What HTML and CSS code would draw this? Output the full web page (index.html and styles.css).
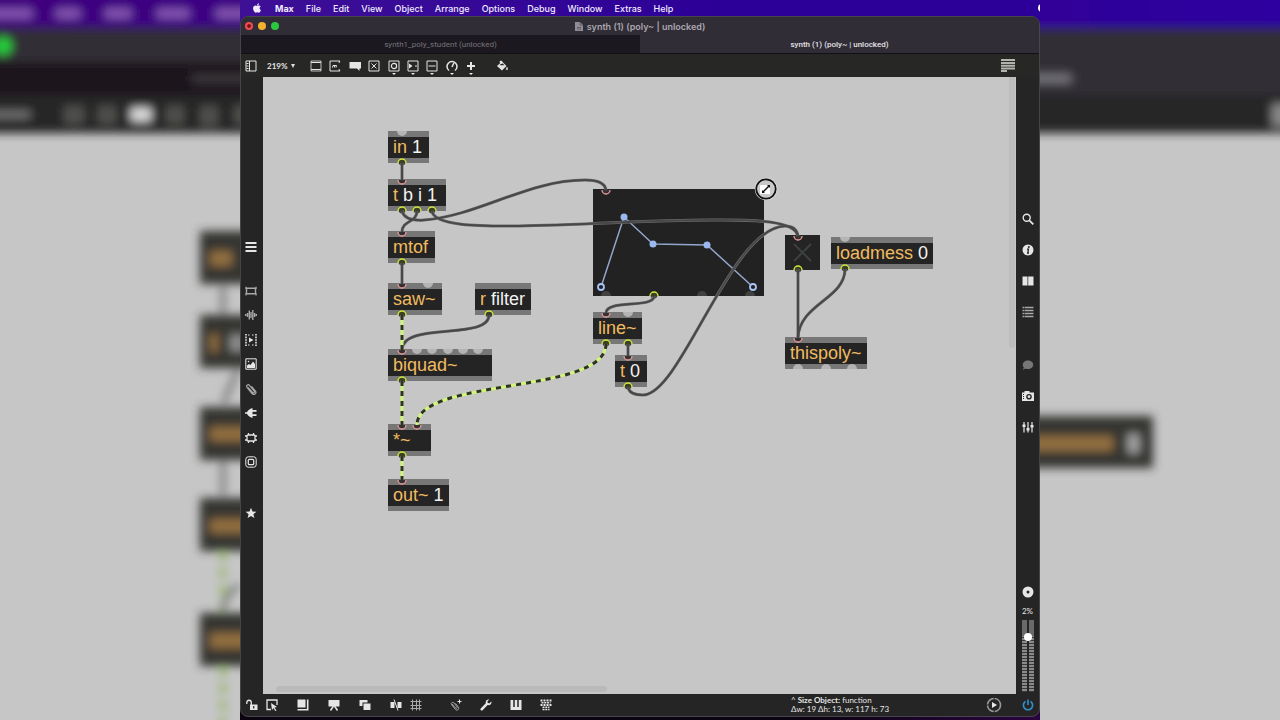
FILE: index.html
```
<!DOCTYPE html>
<html lang="en">
<head>
    <meta charset="UTF-8">
    <meta name="viewport" content="width=device-width, initial-scale=1.0">
    <title>synth (1) (poly~ | unlocked)</title>
    <link rel="stylesheet" href="styles.css">
</head>
<body>
    <!-- Blurred backdrop -->
    <svg class="backdrop" viewBox="0 0 1280 720" preserveAspectRatio="xMidYMin slice" aria-hidden="true">
        <defs>
            <filter id="soft" x="-10%" y="-10%" width="120%" height="120%"><feGaussianBlur stdDeviation="5"/></filter>
            <linearGradient id="purple"><stop offset="0" stop-color="#40007c"/><stop offset="1" stop-color="#2c00a0"/></linearGradient>
        </defs>
        <rect width="1280" height="720" fill="#c6c6c6"/>
        <g filter="url(#soft)">
            <rect x="-40" y="-40" width="1360" height="68" fill="url(#purple)"/>
            <rect x="-40" y="28" width="1360" height="68" fill="#312d36"/>
            <rect x="-40" y="62" width="680" height="34" fill="#1b191f"/>
            <rect x="-40" y="95" width="1360" height="38" fill="#272725"/>
            <g fill="#8a58b6">
                <rect x="-20" y="9" width="52" height="9"/>
                <rect x="56" y="9" width="24" height="9"/>
                <rect x="105" y="9" width="26" height="9"/>
                <rect x="157" y="9" width="32" height="9"/>
                <rect x="216" y="9" width="46" height="9"/>
            </g>
            <circle cx="3" cy="46" r="9" fill="#28d03c"/>
            <rect x="192" y="75" width="60" height="7" fill="#3c3a40"/>
            <rect x="1030" y="74" width="41" height="9" fill="#77747c"/>
            <rect x="-10" y="111" width="40" height="7" fill="#777"/>
            <g fill="#50504e">
                <rect x="64" y="106" width="20" height="18"/>
                <rect x="98" y="106" width="18" height="18"/>
                <rect x="166" y="106" width="18" height="18"/>
                <rect x="200" y="106" width="18" height="20"/>
                <rect x="234" y="106" width="18" height="18"/>
            </g>
            <rect x="131" y="108" width="20" height="13" fill="#ddd"/>
            <rect x="1272" y="104" width="30" height="22" fill="#888"/>
            <path d="M223 285v30M238 369L223 404M223 460v36" stroke="#777" stroke-width="5" fill="none"/>
            <path d="M223 552v60M223 667v80" stroke="#8fb45c" stroke-width="6" stroke-dasharray="9 8"/>
            <path d="M240 586q-14 4-17 25" stroke="#777" stroke-width="5" fill="none"/>
            <g fill="#353431">
                <rect x="200" y="231" width="80" height="53"/>
                <rect x="200" y="315" width="80" height="53"/>
                <rect x="200" y="407" width="80" height="53"/>
                <rect x="200" y="498" width="80" height="53"/>
                <rect x="200" y="613" width="80" height="53"/>
                <rect x="1000" y="416" width="153" height="52"/>
            </g>
            <g fill="#927040">
                <rect x="210" y="251" width="22" height="15"/>
                <rect x="210" y="334" width="8" height="18"/>
                <rect x="210" y="427" width="60" height="14"/>
                <rect x="210" y="519" width="60" height="14"/>
                <rect x="210" y="633" width="60" height="15"/>
                <rect x="1000" y="436" width="113" height="15"/>
            </g>
            <rect x="1128" y="434" width="11" height="19" fill="#a5a5a5"/>
            <rect x="230" y="335" width="14" height="16" fill="#909090"/>
        </g>
    </svg>

    <!-- Shared shapes for patch cords -->
    <svg class="defs" aria-hidden="true">
        <symbol id="inlet" viewBox="-6 -6 12 12"><path d="M-4 0a4 4 0 0 0 8 0z" fill="#333"/><path d="M-4 0a4 4 0 0 0 8 0" fill="none" stroke="#f09c9c" stroke-width="1.3"/></symbol>
        <symbol id="outlet" viewBox="-6 -6 12 12"><circle r="3.4" fill="#3c4028"/><path d="M-4 1a4 4 0 1 1 8 0" fill="none" stroke="#d0e83c" stroke-width="1.4"/></symbol>
        <symbol id="free-in" viewBox="-6 -6 12 12"><path d="M-5 0a5 5 0 0 0 10 0z" fill="#b4b4b4"/></symbol>
        <symbol id="free-out" viewBox="-6 -6 12 12"><path d="M-5 0a5 5 0 0 1 10 0z" fill="currentColor"/></symbol>
        <g id="control">
            <path d="M139 86v17"/>
            <path d="M139 134C141 141 148 144 161 143C215 139 265 103 322 103C335 103 342 106 343 113"/>
            <path d="M154 134C154 146 139 143 139 155"/>
            <path d="M169 134C171 150 225 149 250 149C300 149 400 142 460 143C505 143 532 146 535 159"/>
            <path d="M139 186v21"/>
            <path d="M226 238C226 264 139 244 139 273"/>
            <path d="M391 219C391 232 343 222 343 236"/>
            <path d="M365 267v12"/>
            <path d="M365 310C366 316 371 318 380 318C418 318 468 150 522 149C530 149 534 153 535 159"/>
            <path d="M535 192v69"/>
            <path d="M582 192C582 222 536 227 535 261"/>
        </g>
        <g id="signal">
            <path d="M139 238v35"/>
            <path d="M139 304v44"/>
            <path d="M139 379v24"/>
            <path d="M343 267C343 318 154 300 154 348"/>
        </g>
    </svg>

    <div class="desktop">
        <nav class="menubar" aria-label="Menu bar">
            <button class="menu-item apple" aria-label="Apple"><svg width="8" height="10" viewBox="0 20 384 472"><path fill="currentColor" d="M318.7 268.7c-.2-36.7 16.4-64.4 50-84.8-18.8-26.9-47.2-41.7-84.7-44.6-35.5-2.8-74.3 20.7-88.5 20.7-15 0-49.4-19.7-76.4-19.7C63.3 141.2 4 184.8 4 273.5q0 39.3 14.4 81.2c12.8 36.7 59 126.7 107.2 125.2 25.2-.6 43-17.9 75.8-17.9 31.8 0 48.3 17.9 76.4 17.9 48.6-.7 90.4-82.5 102.6-119.3-65.2-30.7-61.7-90-61.7-91.9zm-56.6-164.2c27.3-32.4 24.8-61.9 24-72.5-24.1 1.4-52 16.4-67.9 34.9-17.5 19.8-27.8 44.3-25.6 71.9 26.1 2 49.9-11.4 69.5-34.3z"/></svg></button>
            <button class="menu-item app">Max</button>
            <button class="menu-item">File</button>
            <button class="menu-item">Edit</button>
            <button class="menu-item">View</button>
            <button class="menu-item">Object</button>
            <button class="menu-item">Arrange</button>
            <button class="menu-item">Options</button>
            <button class="menu-item">Debug</button>
            <button class="menu-item">Window</button>
            <button class="menu-item">Extras</button>
            <button class="menu-item">Help</button>
            <span class="menu-extra"></span>
        </nav>

        <main class="window">
            <header class="titlebar">
                <div class="lights">
                    <button class="light close" aria-label="Close"></button>
                    <button class="light minimize" aria-label="Minimize"></button>
                    <button class="light zoom" aria-label="Zoom"></button>
                </div>
                <h1 class="title">
                    <svg width="8" height="9" viewBox="0 0 8 9"><path d="M0 0h5l3 3v6H0z" fill="#8f8c94"/><path d="M5 0v3h3M2 5.5h4M2 7h4" stroke="#55525a" stroke-width=".8" fill="none"/></svg>
                    synth (1) (poly~ | unlocked)
                </h1>
            </header>

            <div class="tabs" role="tablist">
                <button class="tab" role="tab" aria-selected="false">synth1_poly_student (unlocked)</button>
                <button class="tab active" role="tab" aria-selected="true">synth (1) (poly~ | unlocked)</button>
            </div>

            <div class="toolbar">
                <button class="icon" aria-label="Toggle sidebar"><svg viewBox="0 0 12 12"><path d="M1 1h10v10H1zM4.500 1v10M1.500 3.500h2M1.500 6h2M1.500 8.500h2" fill="none" stroke="currentColor"/></svg></button>
                <button class="zoom-level">219% <span class="caret"></span></button>
                <div class="tools">
                    <button class="icon" aria-label="Object"><svg viewBox="0 0 12 12"><path d="M1 1h10v10H1z" fill="none" stroke="currentColor" stroke-width=".8"/><path d="M1 2.500h10M1 9.500h10" stroke="currentColor" stroke-width="1.200"/></svg></button>
                    <button class="icon" aria-label="Message"><svg viewBox="0 0 12 12"><path d="M11 1H1v10h10M11 1q-1 1-1 2M11 11q-1-1-1-2" fill="none" stroke="currentColor"/><path d="M3.500 7.500l.5-2h3.500l-.5 2M5.700 5.500l-.4 2" fill="none" stroke="currentColor"/></svg></button>
                    <button class="icon" aria-label="Comment"><svg viewBox="0 0 12 12"><path d="M.5 2H12v6.500h-1.500V11L8 8.500H.5z" fill="currentColor"/></svg></button>
                    <button class="icon" aria-label="Toggle"><svg viewBox="0 0 12 12"><path d="M1 1h10v10H1zM3.500 3.500l5 5M8.500 3.500l-5 5" fill="none" stroke="currentColor"/></svg></button>
                    <button class="icon drop" aria-label="Button"><svg viewBox="0 0 12 12"><path d="M1 1h10v10H1z" fill="none" stroke="currentColor"/><circle cx="6" cy="6" r="2.600" fill="none" stroke="currentColor" stroke-width="1.200"/></svg></button>
                    <button class="icon drop" aria-label="Number"><svg viewBox="0 0 12 12"><path d="M1 1h10v10H1z" fill="none" stroke="currentColor"/><path d="M2 3.500L5.500 6 2 8.500z" fill="currentColor"/><path d="M8 6h2" stroke="currentColor"/></svg></button>
                    <button class="icon drop" aria-label="Slider"><svg viewBox="0 0 12 12"><path d="M1 1h10v10H1zM2.500 6h7" fill="none" stroke="currentColor"/></svg></button>
                    <button class="icon drop" aria-label="Dial"><svg viewBox="0 0 12 12"><path d="M3 10.500a5 5 0 1 1 6 0M6 7l1.800-4" fill="none" stroke="currentColor" stroke-width="1.500"/></svg></button>
                    <button class="icon drop" aria-label="Add"><svg viewBox="0 0 12 12"><path d="M6 2v8M2 6h8" stroke="currentColor" stroke-width="2"/></svg></button>
                </div>
                <button class="icon" aria-label="Format"><svg viewBox="0 0 12 12"><path d="M1 6l5-4.500L10.500 6 6 10.500z" fill="currentColor"/><path d="M3.500 5.300L6 3l2.500 2.300z" fill="#272725"/><path d="M4 3V1h2v3M11 7l1 2.500h-2z" fill="currentColor" stroke="currentColor" stroke-width=".4"/></svg></button>
                <button class="icon wide" aria-label="Inspector list"><svg viewBox="0 0 14 13"><path d="M0 1h14M0 4h14M0 6.800h14M0 9.500h14M0 12h6" stroke="currentColor" stroke-width="2"/></svg></button>
            </div>

            <div class="body">
                <aside class="rail left">
                    <button class="icon" aria-label="Menu"><svg viewBox="0 0 12 12"><path d="M.5 2h11M.5 6h11M.5 10h11" stroke="currentColor" stroke-width="2"/></svg></button>
                    <div class="browse">
                        <button class="icon dim" aria-label="Objects"><svg viewBox="0 0 12 12"><path d="M1.500 3v6M10.500 3v6M.5 3.200h11M.5 8.800h11" fill="none" stroke="currentColor" stroke-width="1.400"/><path d="M1 1.700v2M11 1.700v2M1 8.500v2M11 8.500v2" stroke="currentColor" stroke-width="1.200"/></svg></button>
                        <button class="icon dim" aria-label="Audio"><svg viewBox="0 0 12 12"><path d="M.7 5v2M2.500 4v4M4.300 1.500v9M6 3v6M7.800 1v10M9.600 4v4M11.300 5v2" stroke="currentColor" stroke-width="1.400"/></svg></button>
                        <button class="icon" aria-label="Video"><svg viewBox="0 0 12 12"><path d="M1 0v12M11 0v12" stroke="currentColor" stroke-width="1.600" stroke-dasharray="1.600 1"/><path d="M4 3.500L8.500 6 4 8.500zM3 .5h1.500v1H3zM7 .5h1.500v1H7zM3 10.500h1.500v1H3zM7 10.500h1.500v1H7z" fill="currentColor"/></svg></button>
                        <button class="icon" aria-label="Images"><svg viewBox="0 0 12 12"><path d="M.8.8h10.400v10.400H.8z" fill="none" stroke="currentColor"/><path d="M2 10V7.500l2-1.500 1.500 1L8 3.500 10 6v4z" fill="currentColor"/><circle cx="3.500" cy="3.500" r=".8" fill="currentColor"/></svg></button>
                        <button class="icon dim" aria-label="Attachments"><svg viewBox="0 0 12 12"><path d="M3 4.500l4.500 5c1 1 2.600-.3 1.700-1.500L4.500 2.300C3.200.8.800 2.300 2 4.300l5 6.200c2 2 5 0 3.500-2.500L6.500 3.500" fill="none" stroke="currentColor" stroke-width="1.200"/></svg></button>
                        <button class="icon" aria-label="Plug-ins"><svg viewBox="0 0 12 12"><path d="M0 5.200h2C3 3 4.500 2 7.500 1v10C4.500 10 3 9 2 6.800H0zM7 3h4.500v1.700H7zM7 7.300h4.500V9H7z" fill="currentColor"/></svg></button>
                        <button class="icon" aria-label="Devices"><svg viewBox="0 0 12 12"><rect x="2" y="3" width="8" height="6" rx="1" fill="none" stroke="currentColor" stroke-width="1.300"/><path d="M3.500 1v2M8.500 1v2M3.500 9v2M8.500 9v2M0 4h2M10 4h2M0 8h2M10 8h2" stroke="currentColor" stroke-width="1.300"/></svg></button>
                        <button class="icon" aria-label="Packages"><svg viewBox="0 0 12 12"><rect x=".8" y=".8" width="10.400" height="10.400" rx="2.500" fill="none" stroke="currentColor"/><rect x="3.300" y="3.300" width="5.400" height="5.400" rx="1" fill="none" stroke="currentColor" stroke-width="1.200"/></svg></button>
                    </div>
                    <button class="icon" aria-label="Favorites"><svg viewBox="0 0 12 12"><path d="M6 .8l1.500 3.600 3.900.3-3 2.500 1 3.800L6 9l-3.400 2 1-3.800-3-2.500 3.900-.3z" fill="currentColor"/></svg></button>
                </aside>

                <section class="canvas" aria-label="Patcher">
                    <div class="box n-in"><b>in</b> 1</div>
                    <div class="box n-trigger"><b>t</b> b i 1</div>
                    <div class="box n-mtof"><b>mtof</b></div>
                    <div class="box n-saw"><b>saw~</b></div>
                    <div class="box n-receive"><b>r</b> filter</div>
                    <div class="box n-biquad"><b>biquad~</b></div>
                    <div class="box n-times"><b>*~</b></div>
                    <div class="box n-out"><b>out~</b> 1</div>
                    <div class="box n-line"><b>line~</b></div>
                    <div class="box n-zero"><b>t</b> 0</div>
                    <div class="box n-loadmess"><b>loadmess</b> 0</div>
                    <div class="box n-thispoly"><b>thispoly~</b></div>

                    <div class="function">
                        <svg width="171" height="107" viewBox="0 0 171 107" fill="#9ab8ee">
                            <path d="M8 98L31 28 60 55l54 1 46 42" fill="none" stroke="#93a6cb" stroke-width="1.500"/>
                            <circle cx="31" cy="28" r="3.500"/>
                            <circle cx="60" cy="55" r="3.500"/>
                            <circle cx="114" cy="56" r="3.500"/>
                            <g fill="#222" stroke="#a9c4f5" stroke-width="1.800"><circle cx="8" cy="98" r="3"/><circle cx="160" cy="98" r="3"/></g>
                        </svg>
                    </div>
                    <label class="toggle">
                        <input type="checkbox" aria-label="toggle">
                        <svg width="19" height="19" viewBox="0 0 19 19"><path d="M1 1l17 17M18 1L1 18" stroke="#3d413d" stroke-width="2"/></svg>
                    </label>

                    <!-- Ports and patch cords, drawn over the boxes -->
                    <svg class="cords" width="753" height="617" viewBox="0 0 753 617" aria-hidden="true">
                        <g>
                            <use href="#free-in" x="133" y="48" width="12" height="12"/>
                            <use href="#inlet" x="133" y="97" width="12" height="12"/>
                            <use href="#inlet" x="133" y="149" width="12" height="12"/>
                            <use href="#inlet" x="133" y="201" width="12" height="12"/>
                            <use href="#free-in" x="159" y="200" width="12" height="12"/>
                            <use href="#inlet" x="133" y="267" width="12" height="12"/>
                            <use href="#free-in" x="148" y="266" width="12" height="12"/>
                            <use href="#free-in" x="163" y="266" width="12" height="12"/>
                            <use href="#free-in" x="179" y="266" width="12" height="12"/>
                            <use href="#free-in" x="194" y="266" width="12" height="12"/>
                            <use href="#free-in" x="209" y="266" width="12" height="12"/>
                            <use href="#inlet" x="133" y="342" width="12" height="12"/>
                            <use href="#inlet" x="148" y="342" width="12" height="12"/>
                            <use href="#inlet" x="133" y="397" width="12" height="12"/>
                            <use href="#inlet" x="337" y="107" width="12" height="12"/>
                            <use href="#inlet" x="337" y="230" width="12" height="12"/>
                            <use href="#free-in" x="359" y="229" width="12" height="12"/>
                            <use href="#inlet" x="359" y="273" width="12" height="12"/>
                            <use href="#inlet" x="529" y="153" width="12" height="12"/>
                            <use href="#free-in" x="576" y="154" width="12" height="12"/>
                            <use href="#inlet" x="529" y="255" width="12" height="12"/>
                        </g>
                        <g>
                            <use href="#outlet" x="133" y="79" width="12" height="12"/>
                            <use href="#outlet" x="133" y="127" width="12" height="12"/>
                            <use href="#outlet" x="148" y="127" width="12" height="12"/>
                            <use href="#outlet" x="163" y="127" width="12" height="12"/>
                            <use href="#outlet" x="133" y="179" width="12" height="12"/>
                            <use href="#outlet" x="133" y="231" width="12" height="12"/>
                            <use href="#outlet" x="220" y="231" width="12" height="12"/>
                            <use href="#outlet" x="133" y="297" width="12" height="12"/>
                            <use href="#outlet" x="133" y="372" width="12" height="12"/>
                            <use href="#outlet" x="385" y="212" width="12" height="12"/>
                            <use href="#outlet" x="337" y="260" width="12" height="12"/>
                            <use href="#outlet" x="359" y="260" width="12" height="12"/>
                            <use href="#outlet" x="359" y="303" width="12" height="12"/>
                            <use href="#outlet" x="529" y="186" width="12" height="12"/>
                            <use href="#outlet" x="576" y="185" width="12" height="12"/>
                        </g>
                        <g color="#414141">
                            <use href="#free-out" x="337" y="213" width="12" height="12"/>
                            <use href="#free-out" x="433" y="213" width="12" height="12"/>
                            <use href="#free-out" x="481" y="213" width="12" height="12"/>
                        </g>
                        <g color="#b4b4b4">
                            <use href="#free-out" x="529" y="286" width="12" height="12"/>
                            <use href="#free-out" x="557" y="286" width="12" height="12"/>
                            <use href="#free-out" x="583" y="286" width="12" height="12"/>
                        </g>
                        <use href="#control" class="cord"/>
                        <use href="#control" class="cord core"/>
                        <use href="#signal" class="cord signal"/>
                        <use href="#signal" class="cord dashes"/>
                    </svg>

                    <svg class="resize" width="24" height="24" viewBox="0 0 24 24" aria-hidden="true"><circle cx="12" cy="12" r="9.700" fill="#c9c9c9" stroke="#ddd" stroke-width="3"/><circle cx="12" cy="12" r="9.700" fill="none" stroke="#111" stroke-width="1.800"/><path d="M6 8h10v9H6z" fill="#fff"/><path d="M8.500 15.500l7-7" stroke="#111" stroke-width="1.500"/><path d="M13 8h3v3zM8 13v3h3z" fill="#111"/></svg>
                    <div class="scroll-y"></div>
                    <div class="scroll-x"></div>
                </section>

                <aside class="rail right">
                    <button class="icon" aria-label="Search"><svg viewBox="0 0 12 12"><circle cx="4.700" cy="4.700" r="3.500" fill="none" stroke="currentColor" stroke-width="1.400"/><path d="M7.300 7.300l4 4" stroke="currentColor" stroke-width="1.800"/></svg></button>
                    <button class="icon" aria-label="Inspector"><svg viewBox="0 0 12 12"><circle cx="6" cy="6" r="5.500" fill="currentColor"/><circle cx="6.800" cy="3" r="1" fill="#252525"/><path d="M5 5.200h1.500L5.700 9H7" fill="none" stroke="#252525" stroke-width="1.300"/></svg></button>
                    <button class="icon" aria-label="Reference"><svg viewBox="0 0 12 12"><path d="M.5 1.500h5v9h-5zM6.200 1.500h5.300v9H6.200z" fill="currentColor"/></svg></button>
                    <button class="icon dim" aria-label="Console"><svg viewBox="0 0 12 12"><path d="M.5 1.500h2M3 1.500h8.500M.5 4.500h2M3 4.500h8.500M.5 7.500h2M3 7.500h8.500M.5 10.500h2M3 10.500h8.500" stroke="currentColor" stroke-width="1.600"/></svg></button>
                    <button class="icon off" aria-label="Notes"><svg viewBox="0 0 12 12"><path d="M6 1.500c3 0 5.200 1.800 5.200 4.200S9 10 6 10c-1 0-2-.2-2.700-.6L1 11l.8-2.700C1 7.500.8 6.700.8 5.700.8 3.300 3 1.500 6 1.500z" fill="currentColor"/></svg></button>
                    <button class="icon" aria-label="Snapshots"><svg viewBox="0 0 12 12"><path d="M0 2.500h2.500v-1.500h5v1.500H12V11H0z" fill="currentColor"/><circle cx="7" cy="6.700" r="2.800" fill="#252525"/><circle cx="7" cy="6.700" r="1.400" fill="currentColor"/><path d="M1.500 4v6" stroke="#252525" stroke-dasharray="1 1"/></svg></button>
                    <button class="icon" aria-label="Mixer"><svg viewBox="0 0 12 12"><path d="M2 1v10.500M6 1v10.500M10 1v10.500" stroke="currentColor" stroke-width="1.200"/><path d="M.5 3.500h3v2.500h-3zM4.500 7h3v2.500h-3zM8.500 4h3v2.500h-3z" fill="currentColor"/></svg></button>
                    <div class="level">
                        <button class="icon" aria-label="Record"><svg viewBox="0 0 12 12"><circle cx="6" cy="6" r="3.500" fill="none" stroke="currentColor" stroke-width="4"/></svg></button>
                        <label for="gain">2%</label>
                        <input id="gain" class="gain" type="range" min="0" max="100" value="79">
                    </div>
                </aside>
            </div>

            <footer class="statusbar">
                <div class="modes">
                    <div class="pair">
                        <button class="icon" aria-label="Unlock"><svg viewBox="0 0 12 12"><path d="M4 5.500h7.500V11H4z" fill="currentColor"/><path d="M.8 5V3.500c0-3 4.500-3 4.500 0V6" fill="none" stroke="currentColor" stroke-width="1.300"/><path d="M7.700 7v2.500" stroke="#252525" stroke-width="1.200"/></svg></button>
                        <button class="icon" aria-label="Select"><svg viewBox="0 0 12 12"><path d="M5 10.500H1V1h10v5" fill="none" stroke="currentColor" stroke-width="1.300"/><path d="M5 4l6 4-2.500.5 2 3-1.300.5-1.700-3L6 11z" fill="currentColor"/></svg></button>
                    </div>
                    <button class="icon" aria-label="New view"><svg viewBox="0 0 12 12"><path d="M.5.5h8v8h-8z" fill="currentColor"/><path d="M10.700.5v10.200H.5" fill="none" stroke="currentColor" stroke-width="1.600"/></svg></button>
                    <button class="icon" aria-label="Presentation"><svg viewBox="0 0 12 12"><path d="M.5 1h11v6.500h-11z" fill="currentColor"/><path d="M5.500 7l-3 4.500M6.500 7l3 4.500" stroke="currentColor" stroke-width="1.500"/></svg></button>
                    <button class="icon" aria-label="Layers"><svg viewBox="0 0 12 12"><path d="M.5 1h8v2.500H3.500v3.500h-3z" fill="currentColor"/><path d="M4.500 4.500h7V11h-7z" fill="currentColor"/></svg></button>
                    <div class="pair">
                        <button class="icon" aria-label="Patch cords"><svg viewBox="0 0 12 12"><path d="M.5 3h4v6h-4zM7.500 3h4v6h-4z" fill="currentColor"/><path d="M4 .5l4 11" stroke="currentColor"/></svg></button>
                        <button class="icon dim" aria-label="Grid"><svg viewBox="0 0 12 12"><path d="M2.500.5v11M6.500.5v11M9.500.5v11M.5 2.500h11M.5 6.500h11M.5 9.500h11" stroke="currentColor"/></svg></button>
                    </div>
                </div>
                <div class="modes extra">
                    <button class="icon dim" aria-label="Add attachment"><svg viewBox="0 0 12 12"><path d="M2 5l3.500 4c1 1 2.300-.2 1.500-1.200L4 4C2.500 2.500.5 4 1.500 5.500l4 5c1.800 1.500 4-.2 3-2.200L5.500 4.500" fill="none" stroke="currentColor"/><path d="M9.500.5v4M7.500 2.500h4" stroke="#e6e6e6"/></svg></button>
                    <button class="icon" aria-label="Tools"><svg viewBox="0 0 12 12"><path d="M11.300 2.500L9.500 4.300 7.700 4l-.2-1.700L9.300.6C7 0 5.200 2 5.800 4.300L.7 9.400c-1 1.300.6 2.800 1.900 1.900l5-5.200c2.400.7 4.500-1.200 3.700-3.600z" fill="currentColor"/></svg></button>
                    <button class="icon" aria-label="Keyboard"><svg viewBox="0 0 12 12"><path d="M.5 1h11v10h-11z" fill="currentColor"/><path d="M4 1v7M8 1v7" stroke="#252525" stroke-width="1.500"/></svg></button>
                    <button class="icon" aria-label="Controllers"><svg viewBox="0 0 12 12"><path d="M.5 1.500h11M.5 6h11" stroke="currentColor" stroke-width="1.800" stroke-dasharray="2 1"/><path d="M1.500 3.800h9M2.500 8.300h7M2.500 10.500h7" stroke="currentColor" stroke-width="1.500" stroke-dasharray="2 .8"/></svg></button>
                </div>
                <div class="status">
                    <p><span>^</span> <strong>Size Object:</strong> function</p>
                    <p>Δw: 19 Δh: 13, w: 117 h: 73</p>
                </div>
                <button class="icon play" aria-label="Play"><svg viewBox="0 0 16 16"><circle cx="8" cy="8" r="6.500" fill="none" stroke="#999" stroke-width="1.600" stroke-dasharray="9.200 1"/><path d="M6 5l5 3-5 3z" fill="currentColor"/></svg></button>
                <button class="icon power" aria-label="Audio on"><svg viewBox="0 0 12 12"><path d="M3.500 2.300a4.600 4.600 0 1 0 5 0M6 .5v5.500" fill="none" stroke="currentColor" stroke-width="1.600"/></svg></button>
            </footer>
        </main>
    </div>
</body>
</html>
```
FILE: styles.css
```
* {
    box-sizing: border-box;
}

body {
    margin: 0;
    height: 100vh;
    overflow: hidden;
    display: flex;
    justify-content: center;
    font-family: Inter, "Liberation Sans", sans-serif;
    color: #e6e6e6;
}

button {
    padding: 0;
    border: 0;
    background: none;
    font: inherit;
    color: inherit;
}

svg {
    display: block;
}

.backdrop {
    position: fixed;
    top: 0;
    left: 0;
    width: 100%;
    height: 100%;
    z-index: -1;
}

.defs {
    position: absolute;
    width: 0;
    height: 0;
}

.desktop {
    width: 62.5%;
    height: 100%;
    padding-bottom: 3px;
    display: flex;
    flex-direction: column;
    background: linear-gradient(to right, #0b0310 70%, #2a0440);
}

/* Menu bar */
.menubar {
    display: flex;
    align-items: center;
    gap: 12px;
    height: 24px;
    margin-bottom: -8px;
    padding: 0 0 8px 13px;
    overflow: hidden;
    background: linear-gradient(to right, #3e1096, #2c0098 60%);
    font-size: 9px;
    font-weight: 500;
    color: #f0eaff;
}

.menu-item {
    white-space: nowrap;
}

.apple {
    margin-right: 2px;
}

.app {
    font-weight: 700;
}

.menu-extra {
    width: 8px;
    height: 8px;
    margin: 0 -6px 0 auto;
    border-radius: 50%;
    background: #fff;
}

/* Window */
.window {
    flex: 1;
    min-height: 0;
    display: flex;
    flex-direction: column;
    border: 1px solid #47444c;
    border-radius: 8px;
    overflow: hidden;
    background: #252525;
}

.titlebar {
    display: grid;
    grid-template-columns: 1fr auto 1fr;
    align-items: center;
    height: 18px;
    background: #312d36;
}

.lights {
    display: flex;
    gap: 5px;
    padding-left: 4px;
}

.light {
    width: 8px;
    height: 8px;
    border-radius: 50%;
}

.close {
    background: radial-gradient(#7a1015 25%, #ee4c50 40%);
}

.minimize {
    background: #f3b12d;
}

.zoom {
    background: #2ac840;
}

.title {
    display: flex;
    align-items: center;
    gap: 4px;
    margin: 0;
    font-size: 9px;
    font-weight: 600;
    color: #aaa7ae;
}

.tabs {
    display: flex;
    height: 19px;
    border-bottom: 1px solid #111;
    font-family: Roboto, sans-serif;
    font-size: 8px;
}

.tab {
    flex: 1;
    background: #1b191f;
    color: #77747b;
}

.tab.active {
    background: #312d36;
    color: #e4e2e7;
    font-weight: 500;
}

.toolbar {
    display: flex;
    align-items: center;
    height: 23px;
    padding: 0 24px 0 4px;
    background: #272725;
}

.icon {
    flex: none;
    position: relative;
    width: 12px;
    height: 12px;
}

.icon svg {
    width: 100%;
    height: 100%;
}

.dim {
    color: #a8a8a8;
}

.off {
    color: #777;
}

.drop::after {
    content: "";
    position: absolute;
    top: 13px;
    left: 4px;
    border: 2px solid transparent;
    border-top-color: #eee;
}

.zoom-level {
    display: flex;
    align-items: center;
    gap: 4px;
    width: 43px;
    margin-left: 10px;
    font-family: Lato, sans-serif;
    font-size: 8px;
    font-weight: 700;
}

.caret {
    border: 2px solid transparent;
    border-top: 4px solid #ddd;
    border-bottom: 0;
}

.tools {
    display: flex;
    justify-content: space-between;
    width: 167px;
    margin-right: 19px;
}

.wide {
    width: 14px;
    height: 13px;
    margin-left: auto;
    color: #b4b4ae;
}

/* Side rails */
.body {
    flex: 1;
    min-height: 0;
    display: flex;
}

.rail {
    flex: none;
    width: 22px;
    display: flex;
    flex-direction: column;
    align-items: center;
}

.left {
    justify-content: center;
    gap: 32px;
    padding: 0 2px 12px 0;
}

.browse {
    display: flex;
    flex-direction: column;
    justify-content: space-between;
    height: 184px;
    margin-bottom: 6px;
}

.right {
    width: 23px;
    padding-top: 136px;
    gap: 19px;
}

.off {
    margin-top: 22px;
}

.level {
    display: flex;
    flex-direction: column;
    align-items: center;
    margin-top: auto;
    padding-bottom: 2px;
    font-family: Lato, sans-serif;
    font-size: 8px;
    line-height: 10px;
}

.level label {
    margin: 8px 0 4px;
}

.gain {
    appearance: none;
    writing-mode: vertical-lr;
    direction: rtl;
    width: 12px;
    height: 72px;
    margin: 0;
    background:
        linear-gradient(to right, transparent 5px, #252525 5px, #252525 7px, transparent 7px),
        linear-gradient(#6a6a6a 16px, transparent 16px),
        repeating-linear-gradient(#8a8a8a 0 2px, #3a3a3a 2px 3px);
}

.gain::-webkit-slider-thumb {
    appearance: none;
    width: 8px;
    height: 8px;
    margin: 0 2px;
    border-radius: 50%;
    background: #fff;
}

/* Patcher */
.canvas {
    position: relative;
    flex: 1;
    overflow: hidden;
    background: #c6c6c6;
}

.box {
    position: absolute;
    left: 125px;
    height: 32px;
    padding: 0 5px;
    border: solid #777;
    border-width: 6px 0 5px;
    background: #242424;
    color: #f2f2f2;
    font-family: "Liberation Sans", Arial, sans-serif;
    font-size: 18px;
    line-height: 21px;
    white-space: nowrap;
}

.box b {
    font-weight: 400;
    color: #f0bb60;
}

.n-in { top: 54px; width: 41px; }
.n-trigger { top: 102px; width: 58px; }
.n-mtof { top: 154px; width: 47px; }
.n-saw { top: 206px; width: 54px; }
.n-receive { top: 206px; left: 212px; width: 56px; }
.n-biquad { top: 272px; width: 104px; }
.n-times { top: 347px; width: 43px; }
.n-out { top: 402px; width: 61px; }
.n-line { top: 235px; left: 330px; width: 49px; }
.n-zero { top: 278px; left: 352px; width: 32px; }
.n-loadmess { top: 160px; left: 568px; width: 102px; }
.n-thispoly { top: 260px; left: 522px; width: 82px; }

.function {
    position: absolute;
    top: 112px;
    left: 330px;
    background: #222;
}

.toggle {
    position: absolute;
    top: 158px;
    left: 522px;
    display: grid;
    place-items: center;
    width: 35px;
    height: 35px;
    background: #242424;
}

.toggle input {
    position: absolute;
    inset: 0;
    margin: 0;
    opacity: 0;
}

.cords {
    position: absolute;
    top: 0;
    left: 0;
    pointer-events: none;
}

.cord {
    fill: none;
    stroke: #707072;
    stroke-width: 3;
}

.core {
    stroke: #48484a;
    stroke-width: 2;
}

.signal {
    stroke: #d0f47c;
}

.dashes {
    stroke: #30312a;
    stroke-dasharray: 5 5;
}

.resize {
    position: absolute;
    top: 100px;
    left: 491px;
}

.scroll-y {
    position: absolute;
    top: 0;
    right: 1px;
    width: 6px;
    height: 44%;
    border-radius: 0 0 3px 3px;
    background: #bdbdbd;
}

.scroll-x {
    position: absolute;
    left: 13px;
    bottom: 2px;
    width: 44%;
    height: 6px;
    border-radius: 3px;
    background: #bababa;
}

/* Bottom bar */
.statusbar {
    display: flex;
    align-items: center;
    height: 22px;
    padding: 0 5px;
}

.modes {
    display: flex;
    gap: 19px;
    margin-right: 28px;
}

.extra {
    gap: 18px;
}

.pair {
    display: flex;
    gap: 8px;
}

.status {
    width: 195px;
    margin-left: auto;
    font-family: Lato, sans-serif;
    font-size: 8px;
    line-height: 9px;
}

.status p {
    margin: 0;
    white-space: nowrap;
}

.play {
    width: 16px;
    height: 16px;
}

.power {
    margin-left: 20px;
    color: #3192cf;
}
```
